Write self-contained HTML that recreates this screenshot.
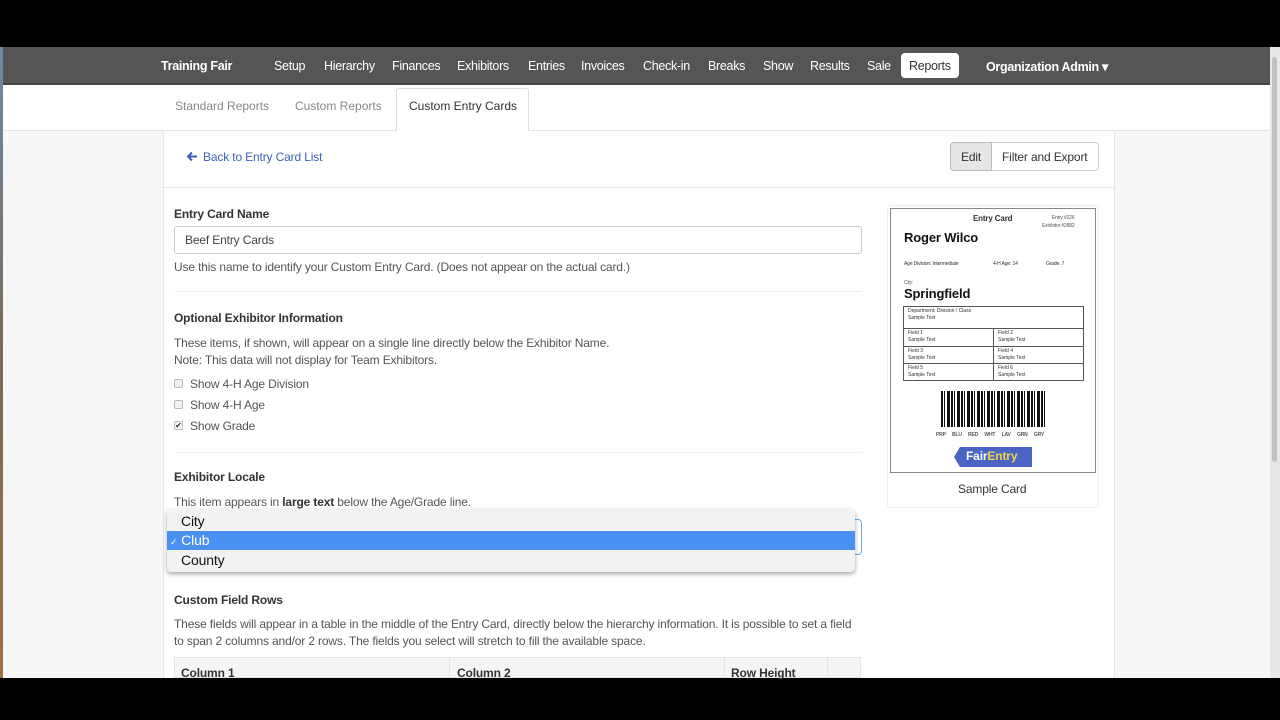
<!DOCTYPE html>
<html><head><style>
*{box-sizing:border-box;margin:0;padding:0}
body{width:1280px;height:720px;background:#000;position:relative;overflow:hidden;font-family:"Liberation Sans",sans-serif;font-size:12px;color:#333}
.abs{position:absolute}
.nav{left:3px;top:47px;width:1267px;height:38px;background:#555;border-bottom:2px solid #444}
.nav span{position:absolute;top:12px;color:#fff;font-size:12.5px;letter-spacing:-0.3px}
.sub{left:3px;top:85px;width:1267px;height:46px;background:#fff;border-bottom:1px solid #e4e4e4}
.sub span{position:absolute;top:14px;font-size:12px;color:#888}
.body{left:3px;top:131px;width:1267px;height:547px;background:#f7f7f7}
.panel{left:163px;top:131px;width:952px;height:547px;background:#fff;border-left:1px solid #e6e6e6;border-right:1px solid #e6e6e6}
.t{position:absolute;font-size:12px;color:#555;white-space:nowrap;letter-spacing:-0.15px}
.b{font-weight:bold;color:#333}
.cb{position:absolute;width:9px;height:9px;border:1px solid #bbb;background:#f2f2f2;border-radius:2px}
.card td{border:1px solid #555;font-size:5px;padding:1px 4px;vertical-align:top;line-height:7px}
</style></head><body>
<div class="abs" style="left:0;top:47px;width:3px;height:631px;background:linear-gradient(#6d8aa8,#7b6a55,#a07040)"></div>
<div class="abs" style="left:1270px;top:47px;width:10px;height:631px;background:#e8e8e8"><div style="margin:10px 2px;width:5px;height:405px;background:#c2c2c2;border-radius:3px"></div></div>
<div class="abs nav">
<span style="left:158px;font-weight:bold">Training Fair</span>
<span style="left:271px">Setup</span><span style="left:321px">Hierarchy</span><span style="left:389px">Finances</span><span style="left:454px">Exhibitors</span><span style="left:525px">Entries</span><span style="left:578px">Invoices</span><span style="left:640px">Check-in</span><span style="left:705px">Breaks</span><span style="left:760px">Show</span><span style="left:807px">Results</span><span style="left:864px">Sale</span>
<div style="position:absolute;left:898px;top:6px;width:58px;height:25px;background:#fff;border-radius:4px"></div>
<span style="left:906px;color:#333">Reports</span>
<span style="left:983px;font-weight:bold">Organization Admin ▾</span>
</div>
<div class="abs sub">
<span style="left:172px">Standard Reports</span><span style="left:292px">Custom Reports</span>
<div style="position:absolute;left:393px;top:3px;width:133px;height:43px;background:#fff;border:1px solid #ddd;border-bottom:none;border-radius:3px 3px 0 0"></div>
<span style="left:406px;color:#333">Custom Entry Cards</span>
</div>
<div class="abs body"></div>
<div class="abs panel">
<div class="abs" style="left:0;top:56px;width:950px;height:1px;background:#e6e6e6"></div>
</div>
<svg class="abs" style="left:187px;top:151px" width="11" height="11" viewBox="0 0 11 11"><path d="M1 5.5H10M5 1.5L1 5.5L5 9.5" stroke="#3f60b8" stroke-width="2" fill="none"/></svg>
<div class="t" style="left:203px;top:150px;color:#3f60b8">Back to Entry Card List</div>
<div class="abs" style="left:950px;top:142px;width:149px;height:29px;border:1px solid #ccc;border-radius:4px;background:#fff"></div>
<div class="abs" style="left:950px;top:142px;width:42px;height:29px;border:1px solid #bbb;border-radius:4px 0 0 4px;background:#e6e6e6"></div>
<div class="t" style="left:961px;top:150px;color:#333">Edit</div>
<div class="t" style="left:1002px;top:150px;color:#333">Filter and Export</div>

<div class="t b" style="left:174px;top:207px">Entry Card Name</div>
<div class="abs" style="left:174px;top:226px;width:688px;height:28px;border:1px solid #ccc;border-radius:3px;background:#fff"></div>
<div class="t" style="left:185px;top:233px;color:#444">Beef Entry Cards</div>
<div class="t" style="left:174px;top:260px">Use this name to identify your Custom Entry Card. (Does not appear on the actual card.)</div>
<div class="abs" style="left:174px;top:291px;width:688px;height:1px;background:#eee"></div>
<div class="t b" style="left:174px;top:311px">Optional Exhibitor Information</div>
<div class="t" style="left:174px;top:336px">These items, if shown, will appear on a single line directly below the Exhibitor Name.</div>
<div class="t" style="left:174px;top:353px">Note: This data will not display for Team Exhibitors.</div>
<div class="cb" style="left:174px;top:379px"></div><div class="t" style="left:190px;top:377px">Show 4-H Age Division</div>
<div class="cb" style="left:174px;top:400px"></div><div class="t" style="left:190px;top:398px">Show 4-H Age</div>
<div class="cb" style="left:174px;top:421px;font-size:8px;line-height:7px;text-align:center">✔</div><div class="t" style="left:190px;top:419px">Show Grade</div>
<div class="abs" style="left:174px;top:452px;width:688px;height:1px;background:#f2f2f2"></div>
<div class="t b" style="left:174px;top:470px">Exhibitor Locale</div>
<div class="t" style="left:174px;top:495px">This item appears in <b style="color:#333">large text</b> below the Age/Grade line.</div>
<div class="abs" style="left:174px;top:519px;width:688px;height:36px;border:1px solid #66aee9;border-radius:4px"></div>
<div class="abs" style="left:167px;top:509px;width:688px;height:63px;background:#f2f2f2;border-radius:4px;box-shadow:0 2px 5px rgba(0,0,0,.35)"></div>
<div class="abs" style="left:167px;top:531px;width:688px;height:19px;background:#4a90f0"></div>
<div class="t" style="left:181px;top:513px;font-size:14px;color:#111">City</div>
<div class="t" style="left:170px;top:532px;font-size:14px;color:#fff"><span style="font-size:9px">✓</span> Club</div>
<div class="t" style="left:181px;top:552px;font-size:14px;color:#111">County</div>
<div class="t b" style="left:174px;top:593px">Custom Field Rows</div>
<div class="t" style="left:174px;top:617px">These fields will appear in a table in the middle of the Entry Card, directly below the hierarchy information. It is possible to set a field</div>
<div class="t" style="left:174px;top:634px">to span 2 columns and/or 2 rows. The fields you select will stretch to fill the available space.</div>
<div class="abs" style="left:174px;top:657px;width:687px;height:21px;background:#f5f5f5;border:1px solid #e4e4e4"></div>
<div class="abs" style="left:449px;top:657px;width:1px;height:21px;background:#e4e4e4"></div>
<div class="abs" style="left:724px;top:657px;width:1px;height:21px;background:#e4e4e4"></div>
<div class="abs" style="left:827px;top:657px;width:1px;height:21px;background:#e4e4e4"></div>
<div class="t b" style="left:181px;top:666px">Column 1</div>
<div class="t b" style="left:457px;top:666px">Column 2</div>
<div class="t b" style="left:731px;top:666px">Row Height</div>

<div class="abs" style="left:887px;top:205px;width:212px;height:303px;background:#fff;border:1px solid #eee;border-radius:3px"></div>
<div class="abs" style="left:890px;top:208px;width:206px;height:265px;border:1px solid #888;background:#fff"></div>
<div class="t b" style="left:973px;top:214px;font-size:8px">Entry Card</div>
<div class="t" style="left:1042px;top:214px;font-size:5px;text-align:right;line-height:8px">&nbsp;&nbsp;&nbsp;&nbsp;&nbsp;&nbsp;Entry #226<br>Exhibitor #2882</div>
<div class="t b" style="left:904px;top:230px;font-size:13px;color:#111">Roger Wilco</div>
<div class="t" style="left:904px;top:261px;font-size:5px;color:#333">Age Division: Intermediate</div>
<div class="t" style="left:993px;top:261px;font-size:5px;color:#333">4-H Age: 14</div>
<div class="t" style="left:1046px;top:261px;font-size:5px;color:#333">Grade: 7</div>
<div class="t" style="left:904px;top:280px;font-size:5px">City:</div>
<div class="t b" style="left:904px;top:286px;font-size:13px;color:#111">Springfield</div>
<table class="card abs" style="left:903px;top:306px;width:181px;border-collapse:collapse">
<tr><td colspan="2" style="height:22px">Department: Division / Class<br>Sample Text</td></tr>
<tr><td style="height:18px">Field 1<br>Sample Text</td><td>Field 2<br>Sample Text</td></tr>
<tr><td style="height:17px">Field 3<br>Sample Text</td><td>Field 4<br>Sample Text</td></tr>
<tr><td style="height:17px">Field 5<br>Sample Text</td><td>Field 6<br>Sample Text</td></tr>
</table>
<div class="abs" style="left:941px;top:391px;width:106px;height:36px;background:repeating-linear-gradient(90deg,#111 0 2px,#fff 2px 3px,#111 3px 4px,#fff 4px 6px,#111 6px 9px,#fff 9px 10px)"></div>
<div class="t b" style="left:936px;top:432px;font-size:5px;color:#555;word-spacing:5px">PRP BLU RED WHT LAV GRN GRY</div>
<div class="abs" style="left:954px;top:447px;width:78px;height:20px;background:#4a63c4;clip-path:polygon(6px 0,100% 0,100% 100%,6px 100%,0 50%)"></div>
<div class="t b" style="left:966px;top:449px;font-size:12px;color:#fff">Fair<span style="color:#f2d24a">Entry</span></div>
<div class="t" style="left:958px;top:482px;color:#333">Sample Card</div>
</body></html>
